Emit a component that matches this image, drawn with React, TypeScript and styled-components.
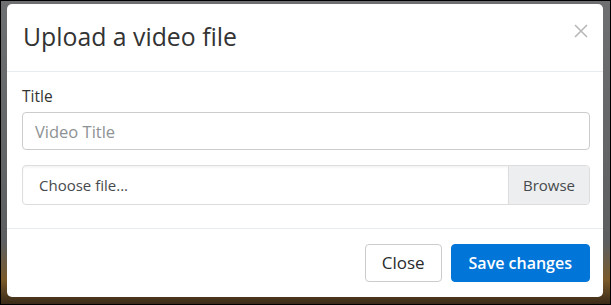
import React from 'react';
import styled, { createGlobalStyle } from 'styled-components';

const GlobalStyle = createGlobalStyle`
  html, body {
    margin: 0;
    padding: 0;
  }
  body {
    font-family: 'Open Sans', 'Liberation Sans', sans-serif;
    color: #292b2c;
  }
  * {
    box-sizing: border-box;
  }
`;

const Backdrop = styled.div`
  width: 611px;
  height: 305px;
  border: 1px solid #000;
  background: linear-gradient(180deg, #6e6f70 0%, #5d5e60 80%, #7a5a2a 92%, #3a2a18 100%);
  padding: 3px 7px 7px 6px;
  overflow: hidden;
`;

const Modal = styled.div`
  background: #fff;
  border-radius: 5px;
  height: 100%;
  display: flex;
  flex-direction: column;
`;

const Header = styled.div`
  height: 68px;
  display: flex;
  align-items: center;
  justify-content: space-between;
  padding: 0 13px 0 16px;
  border-bottom: 1px solid #e9ecef;
`;

const ModalTitle = styled.h5`
  margin: 0;
  font-size: 24.8px;
  font-weight: 400;
  color: #333;
  line-height: 1;
  padding-bottom: 2px;
`;

const CloseX = styled.button`
  border: none;
  background: none;
  padding: 0;
  width: 16px;
  height: 16px;
  cursor: pointer;
  margin-bottom: 11px;
  display: flex;
`;

const Body = styled.div`
  padding: 14px 13px 23px 15px;
  border-bottom: 1px solid #e9ecef;
  display: flex;
  flex-direction: column;
`;

const Label = styled.label`
  font-size: 15.5px;
  color: #333;
  line-height: 20px;
  margin-bottom: 6px;
`;

const TextInput = styled.input`
  height: 38px;
  width: 100%;
  border: 1px solid #ccc;
  border-radius: 4px;
  padding: 0 12px;
  font-family: inherit;
  font-size: 16.5px;
  color: #464a4c;
  margin-bottom: 15px;
  &::placeholder {
    color: #8e9294;
  }
`;

const FileBox = styled.div`
  height: 40px;
  display: flex;
  border: 1px solid #ddd;
  border-radius: 4px;
  overflow: hidden;
`;

const FileName = styled.div`
  flex: 1;
  display: flex;
  align-items: center;
  padding-left: 16px;
  font-size: 15px;
  color: #464a4c;
  box-shadow: inset 0 2px 2px rgba(0, 0, 0, 0.04);
`;

const Browse = styled.div`
  width: 81px;
  display: flex;
  align-items: center;
  justify-content: center;
  font-size: 15px;
  color: #464a4c;
  background: #eceeef;
  border-left: 1px solid #ddd;
`;

const Footer = styled.div`
  flex: 1;
  display: flex;
  justify-content: flex-end;
  align-items: center;
  gap: 9px;
  padding: 0 13px 1px 0;
`;

const Button = styled.button<{ primary?: boolean }>`
  height: 38px;
  border-radius: 4px;
  font-family: inherit;
  font-size: ${(p) => (p.primary ? '16px' : '17px')};
  padding: 0 ${(p) => (p.primary ? '17px' : '16px')};
  cursor: pointer;
  border: 1px solid ${(p) => (p.primary ? '#0275d8' : '#ccc')};
  background: ${(p) => (p.primary ? '#0275d8' : '#fff')};
  color: ${(p) => (p.primary ? '#fff' : '#292b2c')};
  font-weight: ${(p) => (p.primary ? 600 : 400)};
`;

const App = () => (
  <>
    <GlobalStyle />
    <Backdrop>
      <Modal>
        <Header>
          <ModalTitle>Upload a video file</ModalTitle>
          <CloseX aria-label="Close">
            <svg width="14" height="14" viewBox="0 0 14 14">
              <path d="M1 1L13 13M13 1L1 13" stroke="#b8b8b8" strokeWidth="1.6" />
            </svg>
          </CloseX>
        </Header>
        <Body>
          <Label>Title</Label>
          <TextInput placeholder="Video Title" />
          <FileBox>
            <FileName>Choose file...</FileName>
            <Browse>Browse</Browse>
          </FileBox>
        </Body>
        <Footer>
          <Button>Close</Button>
          <Button primary>Save changes</Button>
        </Footer>
      </Modal>
    </Backdrop>
  </>
);

export default App;
